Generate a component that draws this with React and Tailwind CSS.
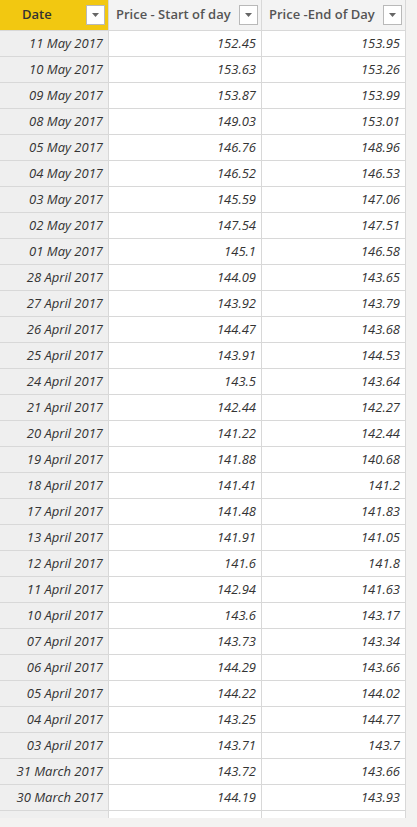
import React from "react";

const rows = [
  ["11 May 2017", "152.45", "153.95"],
  ["10 May 2017", "153.63", "153.26"],
  ["09 May 2017", "153.87", "153.99"],
  ["08 May 2017", "149.03", "153.01"],
  ["05 May 2017", "146.76", "148.96"],
  ["04 May 2017", "146.52", "146.53"],
  ["03 May 2017", "145.59", "147.06"],
  ["02 May 2017", "147.54", "147.51"],
  ["01 May 2017", "145.1", "146.58"],
  ["28 April 2017", "144.09", "143.65"],
  ["27 April 2017", "143.92", "143.79"],
  ["26 April 2017", "144.47", "143.68"],
  ["25 April 2017", "143.91", "144.53"],
  ["24 April 2017", "143.5", "143.64"],
  ["21 April 2017", "142.44", "142.27"],
  ["20 April 2017", "141.22", "142.44"],
  ["19 April 2017", "141.88", "140.68"],
  ["18 April 2017", "141.41", "141.2"],
  ["17 April 2017", "141.48", "141.83"],
  ["13 April 2017", "141.91", "141.05"],
  ["12 April 2017", "141.6", "141.8"],
  ["11 April 2017", "142.94", "141.63"],
  ["10 April 2017", "143.6", "143.17"],
  ["07 April 2017", "143.73", "143.34"],
  ["06 April 2017", "144.29", "143.66"],
  ["05 April 2017", "144.22", "144.02"],
  ["04 April 2017", "143.25", "144.77"],
  ["03 April 2017", "143.71", "143.7"],
  ["31 March 2017", "143.72", "143.66"],
  ["30 March 2017", "144.19", "143.93"],
];

function FilterButton() {
  return (
    <div className="flex h-[20px] w-[19px] items-center justify-center border border-[#b9b9b9] bg-white">
      <svg width="7" height="4" viewBox="0 0 7 4">
        <path d="M0 0h7L3.5 4z" fill="#666" />
      </svg>
    </div>
  );
}

export default function App() {
  const font = { fontFamily: '"Open Sans", "Noto Sans", sans-serif' };
  return (
    <div className="flex h-[827px] w-[417px] flex-col bg-[#f3f2f1] text-[#333]" style={font}>
      <div className="w-[406px] bg-white">
        <div className="grid h-[31px] grid-cols-[108px_153px_145px] text-[13px] font-semibold">
          <div className="flex items-center justify-between bg-[#f2c811] pl-[22px] pr-[3px] border-b border-[#d8d8d8]">
            <span>Date</span>
            <FilterButton />
          </div>
          <div className="flex items-center justify-between border-b border-l border-[#d8d8d8] bg-[#f3f3f3] pl-[7px] pr-[3px] text-[#555]">
            <span>Price - Start of day</span>
            <FilterButton />
          </div>
          <div className="flex items-center justify-between border-b border-x border-[#d8d8d8] bg-[#f3f3f3] pl-[7px] pr-[3px] text-[#555]">
            <span>Price -End of Day</span>
            <FilterButton />
          </div>
        </div>
        {rows.map((r) => (
          <div key={r[0]} className="grid h-[26px] grid-cols-[108px_153px_145px] text-[13px] italic">
            <div className="flex items-center justify-end border-b border-[#d8d8d8] bg-[#efefef] pr-[5px]">{r[0]}</div>
            <div className="flex items-center justify-end border-b border-l border-[#d8d8d8] pr-[5px]">{r[1]}</div>
            <div className="flex items-center justify-end border-b border-x border-[#d8d8d8] pr-[5px]">{r[2]}</div>
          </div>
        ))}
        <div className="grid h-[7px] grid-cols-[108px_153px_145px]">
          <div className="bg-[#efefef]"></div>
          <div className="border-l border-[#d8d8d8]"></div>
          <div className="border-x border-[#d8d8d8]"></div>
        </div>
      </div>
    </div>
  );
}
